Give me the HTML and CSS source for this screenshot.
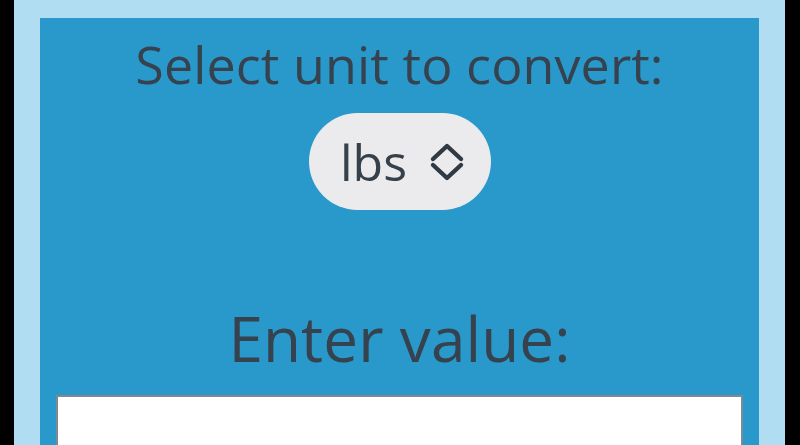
FILE: index.html
```html
<!DOCTYPE html>
<html>
<head>
<meta charset="utf-8">
<link rel="stylesheet" href="styles.css">
</head>
<body>
<div class="frame">
  <div class="panel">
    <div class="card">
      <label class="title">Select unit to convert:</label>
      <div class="select">
        <span class="select-value">lbs</span>
        <svg class="chev" width="36" height="40" viewBox="0 0 36 40" fill="none" stroke="#2f3a44" stroke-width="4.4" stroke-linecap="round" stroke-linejoin="round">
          <path d="M4 17 L18 4 L32 17"/>
          <path d="M4 23 L18 36 L32 23"/>
        </svg>
      </div>
      <label class="title big">Enter value:</label>
      <div class="input"></div>
    </div>
  </div>
</div>
</body>
</html>
```

FILE: styles.css
```css
html, body {
  margin: 0;
  padding: 0;
  background: #000;
  height: 100%;
  overflow: hidden;
}
.frame {
  padding: 0 15px 0 14px;
  height: 445px;
  box-sizing: border-box;
}
.panel {
  background: #b1ddf3;
  height: 100%;
  padding: 18px 26px 0 26px;
  box-sizing: border-box;
}
.card {
  background: #2999cb;
  height: 100%;
  display: flex;
  flex-direction: column;
  align-items: center;
  font-family: "Open Sans", "Noto Sans", sans-serif;
  color: #36424e;
  overflow: hidden;
}
.card > * {
  flex-shrink: 0;
}
.title {
  display: block;
  font-size: 52px;
  line-height: 70px;
  margin-top: 11px;
  letter-spacing: 0.1px;
}
.select {
  margin-top: 14px;
  width: 182px;
  height: 97px;
  border-radius: 49px;
  background: #ebebed;
  display: flex;
  align-items: center;
  justify-content: center;
  gap: 22px;
  box-sizing: border-box;
  padding-left: 6px;
}
.select-value {
  font-size: 50px;
  line-height: 60px;
  color: #35404b;
}
.chev {
  display: block;
}
.big {
  font-size: 62px;
  line-height: 84px;
  margin-top: 86px;
}
.input {
  margin-top: 15px;
  width: 687px;
  height: 80px;
  background: #fff;
  border: 2px solid #7d8a93;
  box-sizing: border-box;
}
```
